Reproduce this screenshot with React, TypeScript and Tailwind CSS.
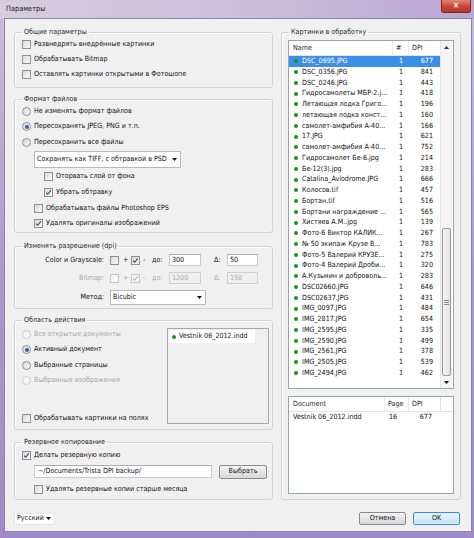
import React from "react";

const files: [string, number][] = [
  ["DSC_0695.JPG", 677],
  ["DSC_0356.JPG", 841],
  ["DSC_0246.JPG", 443],
  ["Гидросамолеты МБР-2.j...", 418],
  ["Летающая лодка Григо...", 196],
  ["летающая лодка конст...", 160],
  ["самолет-амфибия А-40...", 166],
  ["17.JPG", 621],
  ["самолет-амфибия А-40...", 752],
  ["Гидросамолет Бе-6.jpg", 214],
  ["Бе-12(3).jpg", 283],
  ["Catalina_Aviodrome.JPG", 666],
  ["Колосов.tif", 457],
  ["Бортан.tif", 516],
  ["Бортани награждение ...", 565],
  ["Хистяев А.М..jpg", 139],
  ["Фото-6 Виктор КАЛИК...", 267],
  ["№ 50 экипаж Крузе В...", 783],
  ["Фото-5 Валерий КРУЗЕ...", 275],
  ["Фото-4 Валерий Дроби...", 320],
  ["А.Кузьмин и доброволь...", 283],
  ["DSC02660.JPG", 646],
  ["DSC02637.JPG", 431],
  ["IMG_0097.JPG", 484],
  ["IMG_2817.JPG", 654],
  ["IMG_2595.JPG", 335],
  ["IMG_2590.JPG", 499],
  ["IMG_2561.JPG", 378],
  ["IMG_2505.JPG", 539],
  ["IMG_2494.JPG", 462],
];

function Check({ checked = false, disabled = false }: { checked?: boolean; disabled?: boolean }) {
  return (
    <span
      className={`flex h-[9px] w-[9px] shrink-0 items-center justify-center border ${
        disabled
          ? "border-[#c6c6c6] bg-[#f6f6f6]"
          : "border-[#8e8f8f] bg-linear-to-br from-[#d9d9d9] to-[#fbfbfb]"
      }`}
    >
      {checked && (
        <svg viewBox="0 0 8 8" className="h-[7px] w-[7px]">
          <path
            d="M1.3 4.1 L3.1 6 L6.7 1.5"
            fill="none"
            stroke={disabled ? "#b4b4b4" : "#2b4a78"}
            strokeWidth="1.3"
          />
        </svg>
      )}
    </span>
  );
}

function Radio({ on = false, disabled = false }: { on?: boolean; disabled?: boolean }) {
  return (
    <span
      className={`flex h-[9px] w-[9px] shrink-0 items-center justify-center rounded-full border ${
        disabled
          ? "border-[#cfcfcf] bg-[#f4f4f4]"
          : "border-[#8e8f8f] bg-linear-to-br from-[#d4d4d4] to-[#fbfbfb]"
      }`}
    >
      {on && <span className="h-[4px] w-[4px] rounded-full bg-[#2b5fab]" />}
    </span>
  );
}

function Arrow() {
  return (
    <svg viewBox="0 0 5 3" className="h-[3px] w-[5px] shrink-0">
      <path d="M0 0 H5 L2.5 3 Z" fill="#111" />
    </svg>
  );
}

function Dot() {
  return <span className="h-[4px] w-[4px] shrink-0 rounded-full bg-[#15961d]" />;
}

function Row({
  h,
  indent,
  children,
  disabled = false,
}: {
  h: string;
  indent: string;
  children: React.ReactNode;
  disabled?: boolean;
}) {
  return (
    <div className={`flex items-center gap-[3px] ${h} ${indent} ${disabled ? "text-[#a8a8a8]" : ""}`}>
      {children}
    </div>
  );
}

function Group({ title, children }: { title: string; children: React.ReactNode }) {
  return (
    <fieldset className="rounded-[3px] border border-[#d3d3d3] shadow-[inset_1px_1px_0_#fff]">
      <legend className="ml-[7px] px-[2px] leading-[10px] text-[#1e1e1e]">{title}</legend>
      {children}
    </fieldset>
  );
}

export default function App() {
  return (
    <div className="relative flex h-[538px] w-[474px] flex-col overflow-hidden bg-linear-to-b from-[#c9bddb] via-[#ad99cf] to-[#9f89c6] font-['DejaVu_Sans_Condensed','DejaVu_Sans',sans-serif] text-[7.1px] text-[#111]">
      {/* title bar */}
      <div className="flex h-[19px] items-center bg-linear-to-r from-[#d6cde0] via-[#cbc0db] to-[#b8a6d4] pl-[6px] text-[7.3px] text-[#1a1a1a]">
        Параметры
      </div>
      <div className="absolute right-[3px] top-0 flex h-[13px] w-[30px] items-center justify-center rounded-b-[3px] border border-t-0 border-[#7a2a24] bg-linear-to-b from-[#e0897d] via-[#c9473a] to-[#b53426] text-[8px] font-bold leading-none text-white">
        ×
      </div>

      {/* client area */}
      <div className="ml-[5px] flex h-[512px] w-[466px] flex-col bg-[#f0f0f0] shadow-[0_0_0_1px_#8f80ad]">
        <div className="flex pl-[9px] pt-[8px]">
          {/* left column */}
          <div className="flex w-[259px] flex-col">
            <Group title="Общие параметры">
              <div className="flex h-[50px] flex-col">
                <Row h="h-[15px]" indent="pl-[7px]">
                  <Check />
                  <span>Развнедрять внедрённые картинки</span>
                </Row>
                <Row h="h-[15px]" indent="pl-[7px]">
                  <Check />
                  <span>Обрабатывать Bitmap</span>
                </Row>
                <Row h="h-[15px]" indent="pl-[7px]">
                  <Check />
                  <span>Оставлять картинки открытыми в Фотошопе</span>
                </Row>
              </div>
            </Group>

            <div className="mt-[6px]">
              <Group title="Формат файлов">
                <div className="flex h-[128px] flex-col">
                  <Row h="h-[15px]" indent="pl-[7px]">
                    <Radio />
                    <span>Не изменять формат файлов</span>
                  </Row>
                  <Row h="h-[15px]" indent="pl-[7px]">
                    <Radio on />
                    <span>Пересохранять JPEG, PNG и т.п.</span>
                  </Row>
                  <Row h="h-[16px]" indent="pl-[7px]">
                    <Radio />
                    <span>Пересохранить все файлы</span>
                  </Row>
                  <div className="ml-[19px] mt-[1px] flex h-[17px] w-[147px] items-center justify-between border border-[#b9b9b9] bg-white pl-[2px] pr-[3px]">
                    <span>Сохранять как TIFF, с обтравкой в PSD</span>
                    <Arrow />
                  </div>
                  <Row h="h-[16px]" indent="pl-[29px]">
                    <Check />
                    <span>Оторвать слой от фона</span>
                  </Row>
                  <Row h="h-[16px]" indent="pl-[29px]">
                    <Check checked />
                    <span>Убрать обтравку</span>
                  </Row>
                  <Row h="h-[16px]" indent="pl-[19px]">
                    <Check />
                    <span>Обрабатывать файлы Photoshop EPS</span>
                  </Row>
                  <Row h="h-[15px]" indent="pl-[19px]">
                    <Check checked />
                    <span>Удалять оригиналы изображений</span>
                  </Row>
                </div>
              </Group>
            </div>

            <div className="mt-[8px]">
              <Group title="Изменять разрешение (dpi)">
                <div className="flex h-[57px] flex-col pt-[3px]">
                  <div className="flex h-[12px] items-center">
                    <span className="w-[89px] text-right">Color и Grayscale:</span>
                    <span className="ml-[6px]"><Check /></span>
                    <span className="ml-[4px] w-[6px]">+</span>
                    <span className="ml-[2px]"><Check checked /></span>
                    <span className="ml-[3px] w-[6px]">-</span>
                    <span className="ml-[3px] w-[14px]">до:</span>
                    <div className="ml-[3px] flex h-[12px] w-[32px] items-center border border-[#c6c9cf] border-t-[#a9adb5] bg-white pl-[2px]">
                      300
                    </div>
                    <span className="ml-[13px] w-[10px]">Δ:</span>
                    <div className="ml-[3px] flex h-[12px] w-[31px] items-center border border-[#c6c9cf] border-t-[#a9adb5] bg-white pl-[2px]">
                      50
                    </div>
                  </div>
                  <div className="mt-[6px] flex h-[12px] items-center text-[#a9a9a9]">
                    <span className="w-[89px] text-right">Bitmap:</span>
                    <span className="ml-[6px]"><Check disabled /></span>
                    <span className="ml-[4px] w-[6px]">+</span>
                    <span className="ml-[2px]"><Check checked disabled /></span>
                    <span className="ml-[3px] w-[6px]">-</span>
                    <span className="ml-[3px] w-[14px]">до:</span>
                    <div className="ml-[3px] flex h-[12px] w-[32px] items-center border border-[#cfcfcf] bg-[#f0f0f0] pl-[2px]">
                      1200
                    </div>
                    <span className="ml-[13px] w-[10px]">Δ:</span>
                    <div className="ml-[3px] flex h-[12px] w-[31px] items-center border border-[#cfcfcf] bg-[#f0f0f0] pl-[2px]">
                      150
                    </div>
                  </div>
                  <div className="mt-[6px] flex h-[15px] items-center">
                    <span className="w-[89px] text-right">Метод:</span>
                    <div className="ml-[6px] flex h-[15px] w-[96px] items-center justify-between border border-[#b9b9b9] bg-white pl-[2px] pr-[3px]">
                      <span>Bicubic</span>
                      <Arrow />
                    </div>
                  </div>
                </div>
              </Group>
            </div>

            <div className="mt-[6px]">
              <Group title="Область действия">
                <div className="flex h-[104px]">
                  <div className="flex flex-1 flex-col pt-[1px]">
                    <Row h="h-[16px]" indent="pl-[7px]" disabled>
                      <Radio disabled />
                      <span>Все открытые документы</span>
                    </Row>
                    <Row h="h-[15px]" indent="pl-[7px]">
                      <Radio on />
                      <span>Активный документ</span>
                    </Row>
                    <Row h="h-[16px]" indent="pl-[7px]">
                      <Radio />
                      <span>Выбранные страницы</span>
                    </Row>
                    <Row h="h-[15px]" indent="pl-[7px]" disabled>
                      <Radio disabled />
                      <span>Выбранные изображения</span>
                    </Row>
                    <div className="h-[22px]" />
                    <Row h="h-[16px]" indent="pl-[7px]">
                      <Check />
                      <span className="whitespace-nowrap">Обрабатывать картинки на полях</span>
                    </Row>
                  </div>
                  <div className="mr-[3px] mt-[3px] h-[96px] w-[102px] border border-[#a7a7a7] bg-[#efefef] p-px">
                    <div className="flex h-[13px] w-[86px] items-center gap-[3px] bg-white pl-[3px]">
                      <Dot />
                      <span>Vestnik 06_2012.indd</span>
                    </div>
                  </div>
                </div>
              </Group>
            </div>

            <div className="mt-[7px]">
              <Group title="Резервное копирование">
                <div className="flex h-[52px] flex-col">
                  <Row h="h-[16px]" indent="pl-[7px]">
                    <Check checked />
                    <span>Делать резервную копию</span>
                  </Row>
                  <div className="mt-[2px] flex h-[13px] items-center pl-[19px]">
                    <div className="flex h-[13px] w-[178px] items-center border border-[#c6c9cf] border-t-[#a9adb5] bg-white pl-[3px]">
                      ~/Documents/Trista DPI backup/
                    </div>
                    <div className="ml-[7px] flex h-[14px] w-[48px] items-center justify-center rounded-[2px] border border-[#8c8c8c] bg-linear-to-b from-[#f5f5f5] to-[#d8d8d8]">
                      Выбрать
                    </div>
                  </div>
                  <Row h="mt-[3px] h-[16px]" indent="pl-[19px]">
                    <Check />
                    <span>Удалять резервные копии старше месяца</span>
                  </Row>
                </div>
              </Group>
            </div>
          </div>

          {/* right column */}
          <div className="ml-[8px] w-[180px]">
            <Group title="Картинки в обработку">
              <div className="flex h-[462px] flex-col px-[6px] pt-[3px]">
                {/* files list */}
                <div className="flex h-[349px] border border-[#9da1a8] bg-white">
                  <div className="flex w-[151px] flex-col">
                    <div className="flex h-[15px] shrink-0 items-center border-b border-[#e3e3e3] text-[#2a2a2a]">
                      <span className="w-[103px] pl-[4px]">Name</span>
                      <span className="h-full w-px bg-[#ececec]" />
                      <span className="w-[15px] pl-[3px]">#</span>
                      <span className="h-full w-px bg-[#ececec]" />
                      <span className="pl-[3px]">DPI</span>
                    </div>
                    {files.map(([name, dpi], i) => (
                      <div
                        key={i}
                        className={`flex h-[10.75px] shrink-0 items-center ${
                          i === 0 ? "bg-[#3d8ee6] text-white" : ""
                        }`}
                      >
                        <span className="flex w-[104px] items-center gap-[4px] overflow-hidden whitespace-nowrap pl-[5px]">
                          <Dot />
                          <span>{name}</span>
                        </span>
                        <span className="w-[15px] pl-[6px]">1</span>
                        <span className="w-[25px] text-right">{dpi}</span>
                      </div>
                    ))}
                  </div>
                  {/* scrollbar */}
                  <div className="flex w-[12px] flex-col border-l border-[#e6e6e6] bg-[#f3f3f3]">
                    <div className="flex h-[12px] items-center justify-center">
                      <svg viewBox="0 0 5 3" className="h-[3px] w-[5px]">
                        <path d="M0 3 H5 L2.5 0 Z" fill="#333" />
                      </svg>
                    </div>
                    <div className="flex flex-1 flex-col">
                      <div className="h-[175px]" />
                      <div className="mx-px flex h-[148px] flex-col items-center justify-center gap-px rounded-[2px] border border-[#999] bg-linear-to-r from-[#f6f6f6] to-[#e2e2e2]">
                        <span className="h-px w-[5px] bg-[#8a8a8a]" />
                        <span className="h-px w-[5px] bg-[#8a8a8a]" />
                        <span className="h-px w-[5px] bg-[#8a8a8a]" />
                      </div>
                    </div>
                    <div className="flex h-[11px] items-center justify-center">
                      <Arrow />
                    </div>
                  </div>
                </div>

                {/* documents list */}
                <div className="mt-[7px] flex h-[98px] flex-col border border-[#9da1a8] bg-white">
                  <div className="flex h-[15px] items-center border-b border-[#e3e3e3] text-[#2a2a2a]">
                    <span className="w-[95px] pl-[4px]">Document</span>
                    <span className="h-full w-px bg-[#ececec]" />
                    <span className="w-[23px] pl-[3px]">Page</span>
                    <span className="h-full w-px bg-[#ececec]" />
                    <span className="w-[31px] pl-[3px]">DPI</span>
                    <span className="h-full w-px bg-[#e0e0e0]" />
                  </div>
                  <div className="flex h-[11px] items-center">
                    <span className="w-[96px] pl-[4px]">Vestnik 06_2012.indd</span>
                    <span className="w-[24px] pl-[4px]">16</span>
                    <span className="w-[23px] text-right">677</span>
                  </div>
                </div>
              </div>
            </Group>
          </div>
        </div>

        {/* bottom bar */}
        <div className="mt-[12px] flex h-[13px] items-center pl-[9px] pr-[11px]">
          <div className="flex h-[12px] w-[41px] items-center justify-between border border-[#e4e4e4] bg-white pl-[2px] pr-[3px]">
            <span>Русский</span>
            <Arrow />
          </div>
          <div className="ml-auto flex h-[13px] w-[47px] items-center justify-center rounded-[2px] border border-[#8a8a8a] bg-linear-to-b from-[#f4f4f4] to-[#d6d6d6]">
            Отмена
          </div>
          <div className="ml-[7px] flex h-[13px] w-[47px] items-center justify-center rounded-[2px] border border-[#3a8fd3] bg-linear-to-b from-[#eef8fe] to-[#bfe3f7] shadow-[inset_0_0_0_1px_#d9f0fc]">
            OK
          </div>
        </div>
      </div>
    </div>
  );
}
